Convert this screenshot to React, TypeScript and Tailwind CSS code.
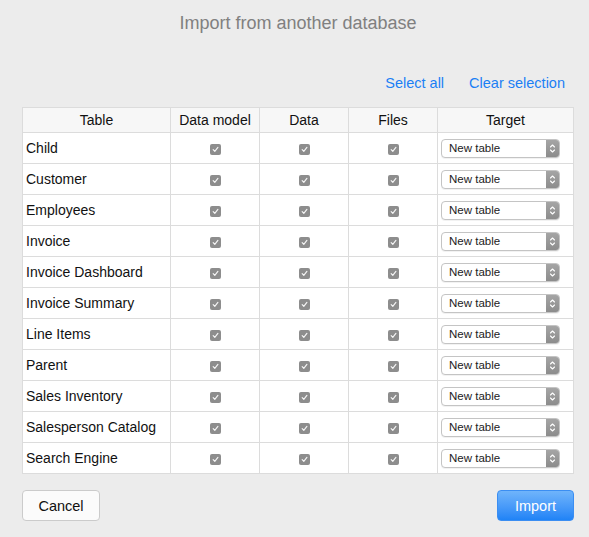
import React from 'react'

const tables = [
    'Child',
    'Customer',
    'Employees',
    'Invoice',
    'Invoice Dashboard',
    'Invoice Summary',
    'Line Items',
    'Parent',
    'Sales Inventory',
    'Salesperson Catalog',
    'Search Engine',
]

function Check() {
    return (
        <span className="inline-flex w-[11px] h-[11px] rounded-[2px] bg-[#8d8d8d] items-center justify-center align-middle">
            <svg width="7" height="7" viewBox="0 0 7 7" fill="none">
                <path d="M1.2 3.7 L2.8 5.3 L5.9 1.4" stroke="#f4f4f4" strokeWidth="1.2" strokeLinecap="round" strokeLinejoin="round" />
            </svg>
        </span>
    )
}

function TargetSelect() {
    return (
        <div className="flex w-[119px] h-[19px] rounded-[4px] border border-[#c4c4c4] bg-white overflow-hidden shadow-[0_1px_0_rgba(0,0,0,0.05)]">
            <span className="flex-1 pl-[7px] text-[11.5px] leading-[17px] text-[#222]">New table</span>
            <span className="w-[13px] bg-gradient-to-b from-[#a5a5a5] to-[#8c8c8c] flex items-center justify-center">
                <svg width="7" height="11" viewBox="0 0 7 11" fill="none">
                    <path d="M1.5 4 L3.5 2 L5.5 4" stroke="#fff" strokeWidth="1.1" strokeLinecap="round" strokeLinejoin="round" />
                    <path d="M1.5 7 L3.5 9 L5.5 7" stroke="#fff" strokeWidth="1.1" strokeLinecap="round" strokeLinejoin="round" />
                </svg>
            </span>
        </div>
    )
}

export default function App() {
    return (
        <div
            className="w-[589px] h-[537px] bg-[#ececec] flex flex-col pl-[22px] pr-[15px]"
            style={{ fontFamily: '"Liberation Sans", Arial, sans-serif' }}
        >
            {/* Title */}
            <h1 className="pt-[12px] text-center text-[18px] leading-[22px] text-[#808080]">
                Import from another database
            </h1>

            {/* Selection links */}
            <div className="mt-[40px] flex justify-end gap-[25px] pr-[9px] text-[14.5px] leading-[18px] text-[#1b7ff5]">
                <span>Select all</span>
                <span>Clear selection</span>
            </div>

            {/* Table */}
            <table className="mt-[15px] w-[551px] border-collapse table-fixed text-[14px] text-[#111]">
                <colgroup>
                    <col className="w-[148px]" />
                    <col className="w-[89px]" />
                    <col className="w-[89px]" />
                    <col className="w-[89px]" />
                    <col className="w-[136px]" />
                </colgroup>
                <thead>
                    <tr className="h-[25px] bg-[#f7f7f7]">
                        {['Table', 'Data model', 'Data', 'Files', 'Target'].map((h) => (
                            <th key={h} className="border border-[#dcdcdc] font-normal text-center leading-[16px] p-0">
                                {h}
                            </th>
                        ))}
                    </tr>
                </thead>
                <tbody>
                    {tables.map((name) => (
                        <tr key={name} className="h-[31px] bg-white">
                            <td className="border border-[#dcdcdc] pl-[3px] leading-[16px]">{name}</td>
                            <td className="border border-[#dcdcdc] text-center leading-none"><Check /></td>
                            <td className="border border-[#dcdcdc] text-center leading-none"><Check /></td>
                            <td className="border border-[#dcdcdc] text-center leading-none"><Check /></td>
                            <td className="border border-[#dcdcdc] pl-[3px]"><TargetSelect /></td>
                        </tr>
                    ))}
                </tbody>
            </table>

            {/* Footer buttons */}
            <div className="mt-[16px] flex justify-between">
                <button className="w-[78px] h-[31px] rounded-[4px] border border-[#cbcbcb] bg-[#fbfbfb] text-[14.5px] leading-[18px] pt-[1px] text-[#111]">
                    Cancel
                </button>
                <button className="w-[77px] h-[31px] rounded-[4px] border border-[#3b8ef2] bg-gradient-to-b from-[#6fb4fb] to-[#1f83f6] text-[14.5px] leading-[18px] pt-[1px] text-white">
                    Import
                </button>
            </div>
        </div>
    )
}
